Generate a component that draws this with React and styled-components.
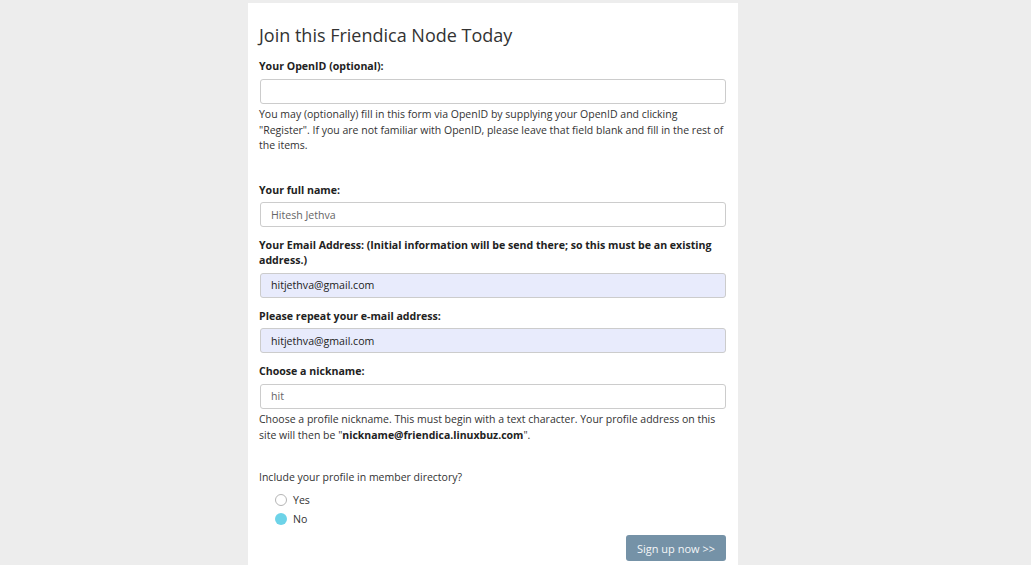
import React from 'react';
import styled, { createGlobalStyle } from 'styled-components';

const GlobalStyle = createGlobalStyle`
  html, body {
    margin: 0;
    padding: 0;
    background: #ededed;
    font-family: 'Open Sans', 'Liberation Sans', sans-serif;
    color: #333;
  }
`;

const Page = styled.div`
  min-height: 565px;
  padding-left: 248px;
  padding-top: 3px;
  box-sizing: border-box;
`;

const Card = styled.div`
  width: 490px;
  box-sizing: border-box;
  background: #fff;
  padding: 18px 12px 4px 11px;
  min-height: 562px;
`;

const Title = styled.h1`
  margin: 0 0 10px;
  font-size: 18px;
  line-height: 28px;
  font-weight: 400;
  color: #333;
`;

const Field = styled.div`
  margin-bottom: ${({ $gap }) => ($gap ? `${$gap}px` : '11px')};
`;

const Label = styled.label`
  display: block;
  font-size: 10.6px;
  line-height: 15px;
  font-weight: 700;
  color: #222;
  margin-bottom: 4.5px;
`;

const Input = styled.input`
  display: block;
  width: 466px;
  height: 25px;
  box-sizing: border-box;
  margin-left: 1px;
  padding: 0 10px;
  border: 1px solid #ccc;
  border-radius: 3px;
  background: ${({ $filled }) => ($filled ? '#e8ebfc' : '#fff')};
  font-family: inherit;
  font-size: 10.6px;
  color: ${({ $filled }) => ($filled ? '#222' : '#666')};
  outline: none;
`;

const Help = styled.p`
  margin: 3.5px 0 0;
  font-size: 10.5px;
  line-height: 15.5px;
  color: #333;

  strong {
    color: #222;
  }
`;

const Question = styled.div`
  font-size: 10.5px;
  line-height: 15px;
  color: #333;
  margin-bottom: 5px;
`;

const RadioRow = styled.label`
  display: flex;
  align-items: center;
  gap: 6px;
  padding-left: 16px;
  height: 19px;
  font-size: 10.6px;
  color: #333;
`;

const Radio = styled.span`
  width: 12px;
  height: 12px;
  border-radius: 50%;
  box-sizing: border-box;
  border: ${({ $checked }) => ($checked ? 'none' : '1px solid #b5b5b5')};
  background: ${({ $checked }) => ($checked ? '#6dd3e8' : '#fff')};
`;

const Actions = styled.div`
  display: flex;
  justify-content: flex-end;
`;

const Button = styled.button`
  width: 100px;
  height: 26px;
  border: none;
  border-radius: 3px;
  background: #7592a7;
  color: #f4f6f8;
  font-family: inherit;
  font-size: 11px;
  padding: 0;
`;

export default function App() {
  return (
    <>
      <GlobalStyle />
      <Page>
        <Card>
          <Title>Join this Friendica Node Today</Title>

          <Field $gap={29}>
            <Label>Your OpenID (optional):</Label>
            <Input readOnly value="" />
            <Help>
              You may (optionally) fill in this form via OpenID by supplying your OpenID and clicking
              "Register". If you are not familiar with OpenID, please leave that field blank and fill in
              the rest of the items.
            </Help>
          </Field>

          <Field>
            <Label>Your full name:</Label>
            <Input readOnly value="Hitesh Jethva" />
          </Field>

          <Field>
            <Label>
              Your Email Address: (Initial information will be send there; so this must be an existing
              address.)
            </Label>
            <Input readOnly $filled value="hitjethva@gmail.com" />
          </Field>

          <Field>
            <Label>Please repeat your e-mail address:</Label>
            <Input readOnly $filled value="hitjethva@gmail.com" />
          </Field>

          <Field $gap={27}>
            <Label>Choose a nickname:</Label>
            <Input readOnly value="hit" />
            <Help>
              Choose a profile nickname. This must begin with a text character. Your profile address on
              this site will then be "<strong>nickname@friendica.linuxbuz.com</strong>".
            </Help>
          </Field>

          <Field $gap={7}>
            <Question>Include your profile in member directory?</Question>
            <RadioRow>
              <Radio />
              Yes
            </RadioRow>
            <RadioRow>
              <Radio $checked />
              No
            </RadioRow>
          </Field>

          <Actions>
            <Button>Sign up now &gt;&gt;</Button>
          </Actions>
        </Card>
      </Page>
    </>
  );
}
